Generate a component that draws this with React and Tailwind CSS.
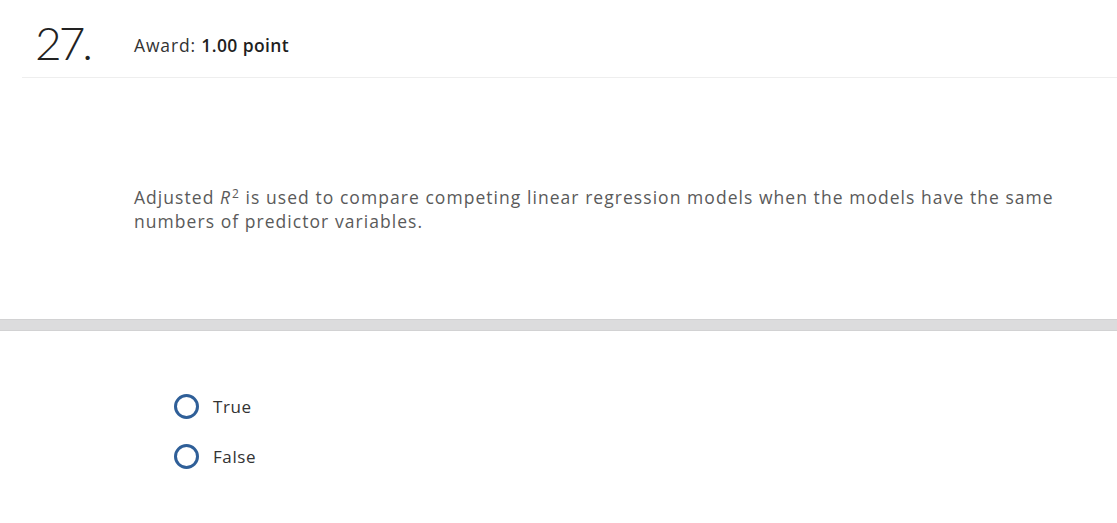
export default function App() {
  return (
    <div className="w-[1117px] h-[523px] bg-white overflow-hidden" style={{ fontFamily: "'Open Sans', Lato, sans-serif" }}>
      <div className="ml-[22px] h-[78px] flex items-center border-b border-[#eeeeee]">
        <div className="w-[112px] pl-[13px] pt-[8px] text-[46px] font-light text-[#222] leading-none tracking-[-3px]" style={{ fontFamily: "Lato, sans-serif" }}>27.</div>
        <div className="text-[17.5px] text-[#333] pt-[13px] tracking-[0.85px]">
          Award: <span className="text-[#1f1f1f] font-semibold tracking-[0.4px]">1.00 point</span>
        </div>
      </div>
      <div className="h-[241px] pl-[134px] pr-[48px] pt-[107px]">
        <p className="text-[17.5px] leading-[24px] text-[#5a5a5a] tracking-[1.05px]">
          Adjusted <i>R</i><span className="relative -top-[6px] text-[12px] leading-none ml-[1px]">2</span> is used to compare competing linear regression models when the models have the same numbers of predictor variables.
        </p>
      </div>
      <div className="h-[12px] bg-[#dcdcdd] border-t border-b border-[#d2d2d3]"></div>
      <div className="pl-[174px] pt-[63px] flex flex-col gap-[24px]">
        {["True", "False"].map(o => (
          <label key={o} className="flex items-center gap-[14px]">
            <span className="w-[25px] h-[25px] rounded-full border-[3px] border-[#2f5f98]"></span>
            <span className="text-[17px] text-[#333] tracking-[0.6px]">{o}</span>
          </label>
        ))}
      </div>
    </div>
  );
}
